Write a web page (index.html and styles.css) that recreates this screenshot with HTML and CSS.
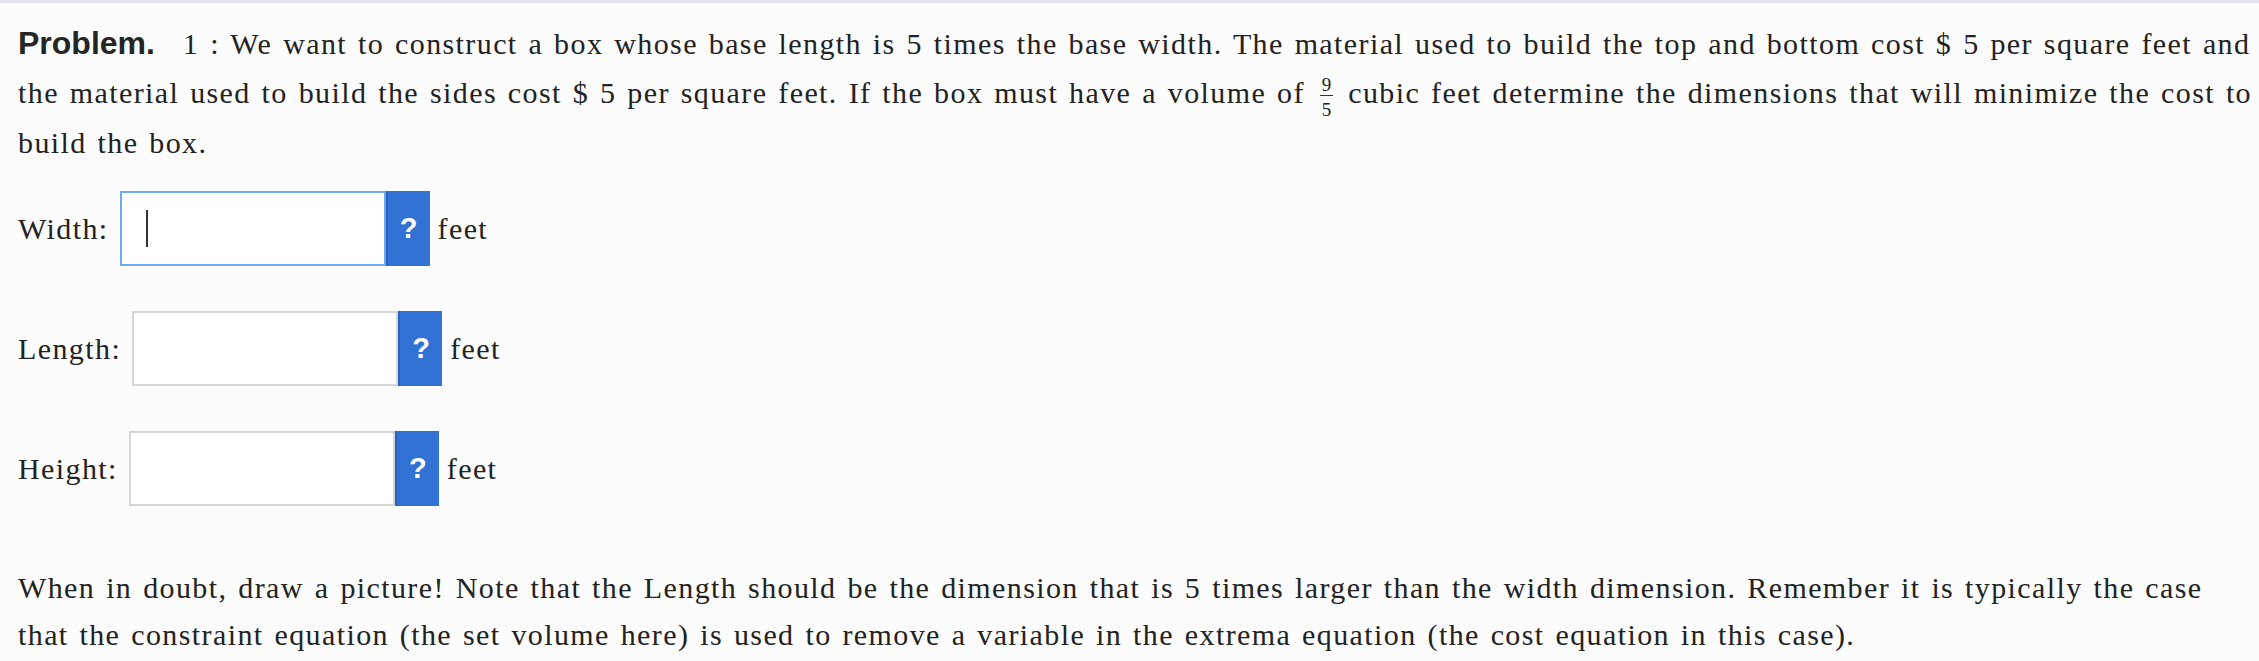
FILE: index.html
```html
<!DOCTYPE html>
<html lang="en">
<head>
<meta charset="utf-8">
<title>Problem 1</title>
<link rel="stylesheet" href="styles.css">
</head>
<body>
<div class="topline"></div>
<main class="problem">
  <p class="statement"><span class="tag">Problem.</span> <span class="num">1 :</span> We want to construct a box whose base length is 5 times the base width. The material used to build the top and bottom cost $ 5 per square feet and the material used to build the sides cost $ 5 per square feet. If the box must have a volume of <span class="frac"><span class="nu">9</span><span class="de">5</span></span> cubic feet determine the dimensions that will minimize the cost to build the box.</p>

  <div class="answers">
    <div class="row">
      <span class="lbl">Width:</span>
      <span class="field focused"><span class="caret"></span></span>
      <span class="help">?</span>
      <span class="unit">feet</span>
    </div>
    <div class="row">
      <span class="lbl">Length:</span>
      <span class="field"></span>
      <span class="help">?</span>
      <span class="unit">feet</span>
    </div>
    <div class="row">
      <span class="lbl">Height:</span>
      <span class="field"></span>
      <span class="help">?</span>
      <span class="unit">feet</span>
    </div>
  </div>

  <p class="hint">When in doubt, draw a picture! Note that the Length should be the dimension that is 5 times larger than the width dimension. Remember it is typically the case that the constraint equation (the set volume here) is used to remove a variable in the extrema equation (the cost equation in this case).</p>
</main>
</body>
</html>
```

FILE: styles.css
```css
html, body {
  margin: 0;
  padding: 0;
  background: #fcfcfc;
}

body {
  font-family: "Liberation Serif", "Times New Roman", serif;
  font-size: 30px;
  color: #222;
  letter-spacing: 1.4px;
  word-spacing: 2px;
}

.topline {
  height: 3px;
  background: #e2e2ef;
}

.problem {
  padding: 0 4px 0 18px;
}

.statement {
  margin: 16px 0 0 0;
  line-height: 49px;
}

.tag {
  font-family: "Liberation Sans", Arial, sans-serif;
  font-weight: bold;
  font-size: 32px;
  letter-spacing: 0;
  word-spacing: 0;
  margin-right: 17px;
  color: #252525;
}

.frac {
  display: inline-flex;
  flex-direction: column;
  align-items: center;
  vertical-align: 12px;
  font-size: 19px;
  line-height: 17px;
  letter-spacing: 0;
  margin: 0 4px;
}

.frac .nu {
  padding: 0 2px 2px;
  border-bottom: 1px solid #333;
}

.frac .de {
  padding-top: 5px;
}

.answers {
  display: flex;
  flex-direction: column;
  gap: 45px;
  margin-top: 24px;
}

.row {
  display: flex;
  align-items: center;
  height: 75px;
}

.lbl {
  margin-right: 11px;
}

.field {
  box-sizing: border-box;
  width: 266px;
  height: 75px;
  background: #fff;
  border: 2px solid #d6d6d6;
  display: flex;
  align-items: center;
  padding-left: 24px;
}

.field.focused {
  border-color: #6eaaf0;
}

.caret {
  width: 2px;
  height: 37px;
  background: #333;
}

.help {
  box-sizing: border-box;
  width: 44px;
  height: 75px;
  background: #3272d5;
  border-left: 2px solid #2a63bd;
  color: #fff;
  font-family: "Liberation Sans", Arial, sans-serif;
  font-weight: bold;
  font-size: 29px;
  letter-spacing: 0;
  display: flex;
  align-items: center;
  justify-content: center;
}

.unit {
  margin-left: 8px;
}

.hint {
  margin: 58px 0 0 0;
  line-height: 47px;
}
```
